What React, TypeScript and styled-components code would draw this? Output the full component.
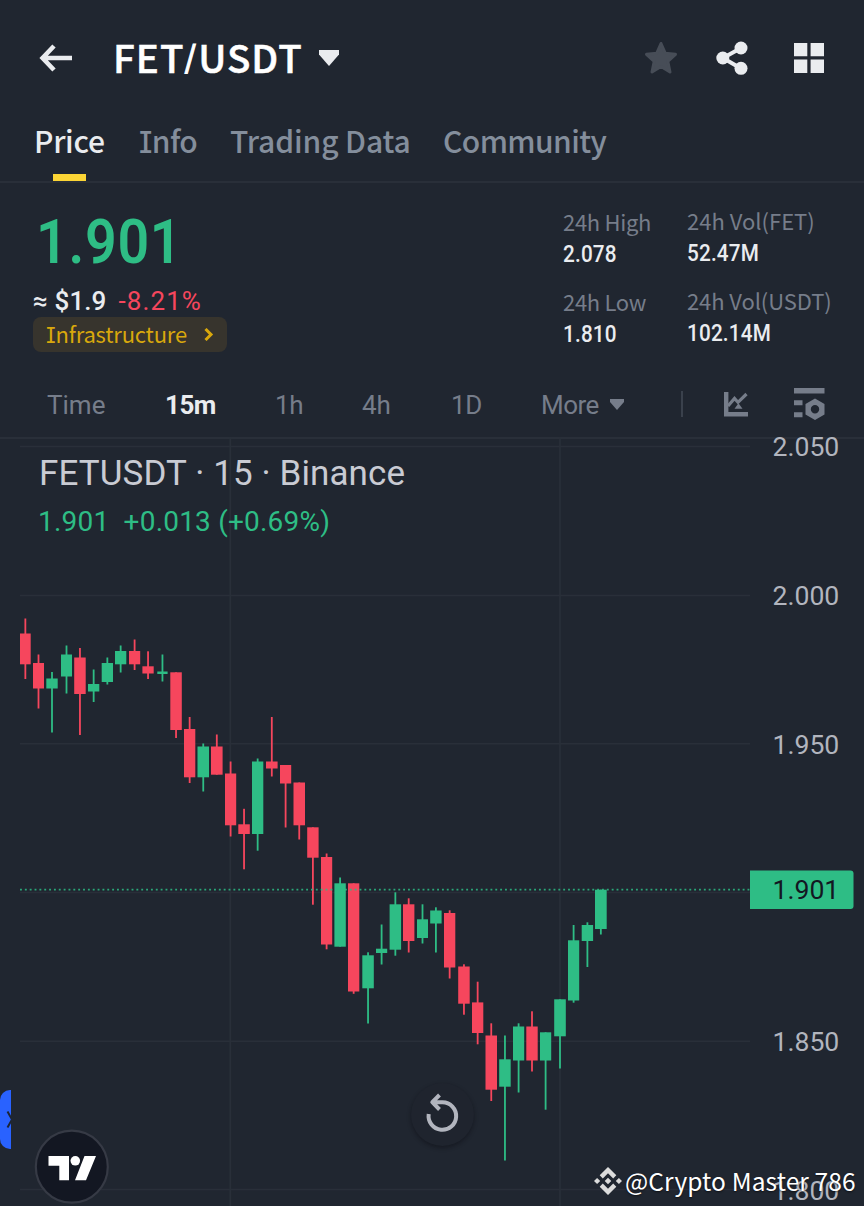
import React from "react";
import styled, { createGlobalStyle } from "styled-components";

const GREEN = "#2ebd85";
const RED = "#f6465d";
const BG = "#202630";
const GREY = "#848e9c";
const LINE = "#292f39";

const plex = '"Noto Sans CJK SC", "Noto Sans", sans-serif';
const din = 'Roboto, "Noto Sans", sans-serif';

const Global = createGlobalStyle`
  * { box-sizing: border-box; }
  html, body { margin: 0; background: ${BG}; }
  body { overflow: hidden; }
  svg { display: block; flex: none; }
`;

const Page = styled.main`
  width: 864px;
  height: 1206px;
  background: ${BG};
  display: flex;
  flex-direction: column;
  overflow: hidden;
`;

const TopBar = styled.header`
  height: 116px;
  display: flex;
  align-items: center;
  padding: 0 40px 0 39px;
`;

const Pair = styled.h1`
  margin: 0 0 0 40px;
  width: 206px;
  font: 500 38.5px/48px ${plex};
  letter-spacing: 1px;
  color: #fff;
  -webkit-text-stroke: 0.5px #fff;
  white-space: nowrap;
  padding-bottom: 4px;
`;

const Slash = styled.span`
  font-size: 30px;
  line-height: 0;
  vertical-align: 5px;
  letter-spacing: 2px;
  -webkit-text-stroke: 1px #fff;
`;

const Actions = styled.div`
  margin-left: auto;
  display: grid;
  grid-template-columns: 72px 78px 30px;
  align-items: center;
`;

const Tabs = styled.nav`
  height: 67px;
  display: grid;
  grid-template-columns: 105px 91px 213px 200px;
  padding-left: 34px;
  border-bottom: 2px solid ${LINE};
`;

const Tab = styled.div<{ $active?: boolean; $ls: number }>`
  display: flex;
  flex-direction: column;
  justify-content: space-between;
  font: 500 30px/36px ${plex};
  letter-spacing: ${(p) => p.$ls}px;
  color: ${(p) => (p.$active ? "#eaecef" : GREY)};
  white-space: nowrap;
  padding-top: 6px;
`;

const SlabI = styled.span<{ $size: number }>`
  font-family: Inter, sans-serif;
  font-size: ${(p) => p.$size}px;
  font-feature-settings: "cv08";
`;

const Underline = styled.i`
  width: 33px;
  height: 7px;
  margin-left: 19px;
  background: #fcd535;
`;

const Ticker = styled.section`
  height: 189px;
  display: flex;
  justify-content: space-between;
  padding-left: 33px;
`;

const PriceColumn = styled.div`
  display: flex;
  flex-direction: column;
  align-items: flex-start;
`;

const LastPrice = styled.div`
  font: 600 61px/64px ${din};
  letter-spacing: 0.8px;
  color: ${GREEN};
  margin: 27px 0 0 3px;
  transform: scaleX(0.91);
  transform-origin: left;
`;

const SubPrice = styled.div`
  display: flex;
  gap: 12px;
  margin-top: 12px;
  font: 500 26px/30px ${din};
  letter-spacing: 0.1px;
  color: #eaecef;
`;

const Change = styled.span`
  color: ${RED};
  font-weight: 400;
  letter-spacing: 1.1px;
`;

const Tag = styled.div`
  margin-top: 1px;
  width: 194px;
  height: 35px;
  border-radius: 8px;
  background: #37342d;
  color: #d9a80c;
  display: flex;
  align-items: center;
  justify-content: space-between;
  padding: 0 13px 0 13px;
  font: 400 22px/35px ${plex};
  letter-spacing: -0.2px;
`;

const Stats = styled.dl`
  margin: 0;
  padding-top: 22px;
  width: 301px;
  display: grid;
  grid-template-columns: 124px 177px;
  grid-auto-rows: 80px;
`;

const Stat = styled.div<{ $up?: boolean }>`
  margin-top: ${(p) => (p.$up ? -1 : 0)}px;
`;

const StatLabel = styled.dt<{ $ls: number }>`
  font: 400 22px/32px ${plex};
  letter-spacing: ${(p) => p.$ls}px;
  color: #767d8a;
`;

const StatValue = styled.dd`
  margin: 3px 0 0;
  font: 500 23px/30px ${din};
  letter-spacing: 0.2px;
  color: #eaecef;
  transform: scaleX(0.9);
  transform-origin: left;
`;

const Intervals = styled.nav`
  height: 67px;
  display: grid;
  grid-template-columns: 118px 110px 87px 89px 90px 69px 71px 43px 70px 40px;
  align-items: center;
  padding: 0 0 1px 47px;
  border-bottom: 2px solid ${LINE};
`;

const Interval = styled.span<{ $active?: boolean; $ls?: number }>`
  font: ${(p) => (p.$active ? 700 : 400)} 26px/32px ${din};
  letter-spacing: ${(p) => p.$ls ?? 0}px;
  color: ${(p) => (p.$active ? "#eaecef" : "#767d8a")};
  padding-top: 2px;
`;

const Divider = styled.i`
  width: 2px;
  height: 26px;
  background: #3a414c;
`;

const Chart = styled.section`
  position: relative;
  flex: 1;
  font-family: Roboto, sans-serif;
`;

const Plot = styled.svg`
  overflow: visible;
`;

const Legend = styled.div`
  position: absolute;
  left: 39px;
  top: 14px;
`;

const SymbolName = styled.div`
  font-size: 35px;
  line-height: 42px;
  color: #c9cbd3;
  letter-spacing: 0.1px;
  white-space: nowrap;
`;

const Quote = styled.div`
  margin: 11px 0 0 -1px;
  font-size: 28px;
  line-height: 32px;
  color: ${GREEN};
  letter-spacing: 0.2px;
  white-space: pre;
`;

const ResetButton = styled.div`
  position: absolute;
  left: 411px;
  top: 644px;
  width: 63px;
  height: 63px;
  border-radius: 50%;
  background: #1f242e;
  box-shadow: 0 2px 4px rgba(10, 12, 18, 0.45);
`;

const Handle = styled.div`
  position: absolute;
  left: 0;
  top: 651px;
  width: 11px;
  height: 59px;
  border-radius: 10px 0 0 10px;
  background: #2962ff;
`;

const Badge = styled.div`
  position: absolute;
  left: 34px;
  top: 690px;
`;

const Watermark = styled.div`
  position: absolute;
  left: 594px;
  top: 724px;
  display: flex;
  align-items: center;
  gap: 3px;
  font: 400 24.5px/36px "Noto Sans CJK SC", sans-serif;
  letter-spacing: 0.12px;
  color: #fff;
  white-space: nowrap;
  text-shadow: 0 1px 2px rgba(0, 0, 0, 0.6);
`;

// [left, width, body top, body bottom, wick top, wick bottom, rising]
type Candle = [number, number, number, number, number, number, 0 | 1];
const candles: Candle[] = [
  [20, 10.7, 633.5, 664.3, 618.5, 679, 0],
  [33, 11, 663, 688.5, 654.5, 708.5, 0],
  [46.3, 11.4, 678.5, 688.5, 672, 732.5, 1],
  [61, 11, 654.5, 676.5, 645.5, 693.5, 1],
  [74.2, 11.5, 657.5, 694, 648, 735, 0],
  [88, 11.3, 684, 691.5, 669.5, 702, 1],
  [101.7, 11.3, 663, 682, 657.5, 684.5, 1],
  [115, 11.3, 651, 664.3, 645.5, 672.5, 1],
  [129, 11.2, 651, 664.3, 639.5, 670, 0],
  [142.4, 11.3, 666.3, 673.5, 651.3, 679, 0],
  [157.3, 10.3, 671.5, 674, 654.5, 681.5, 1],
  [170.3, 11.5, 672.3, 730, 672.3, 738, 0],
  [184, 11.3, 729, 777.3, 717, 783, 0],
  [197.5, 11.5, 746.5, 777.3, 743.5, 791.5, 1],
  [211, 11.6, 746.5, 774.7, 734.5, 774.7, 0],
  [225, 11.2, 773.5, 825.3, 761.5, 836.5, 0],
  [238.3, 11.5, 824.3, 834, 808.8, 869.3, 0],
  [252, 11.3, 761.5, 834, 758.5, 850.7, 1],
  [266, 11.6, 761.5, 768.5, 717, 776.5, 0],
  [280, 11.2, 765, 783.5, 765, 827.5, 0],
  [293.5, 11.5, 782.5, 825.3, 782.5, 839.5, 0],
  [307.2, 11.4, 827.3, 857.7, 827.3, 904.7, 0],
  [321, 11.2, 857, 944.5, 853.5, 949.3, 0],
  [334.4, 11.4, 883.3, 946.7, 877.5, 946.7, 1],
  [348, 11.3, 883.3, 991.5, 883.3, 993.8, 0],
  [362.3, 11.5, 955.3, 988.3, 952.3, 1023.5, 1],
  [376, 11.2, 948.7, 953, 924.5, 964.5, 1],
  [389.6, 11.5, 904.3, 949.7, 892.3, 955.7, 1],
  [403, 11.4, 904.3, 941, 898.3, 952.5, 0],
  [417, 11, 919.3, 938, 904.3, 943.5, 1],
  [430.2, 11.4, 910.5, 923.5, 907.3, 952.5, 1],
  [444, 11.3, 913, 967.5, 910.3, 978.5, 0],
  [458.2, 11.5, 966.5, 1003.7, 964.3, 1014.7, 0],
  [472, 11.3, 1002.4, 1033, 981.7, 1044.3, 0],
  [485.5, 11.5, 1035.5, 1089.7, 1023.3, 1101, 0],
  [499.2, 11.5, 1059.3, 1086.7, 1035.5, 1160.5, 1],
  [513, 11.2, 1026.5, 1060.5, 1023.3, 1092.5, 1],
  [526.3, 11.4, 1026.5, 1060.5, 1011.3, 1071.5, 0],
  [540, 11.2, 1032.3, 1060.5, 1032.3, 1109.7, 1],
  [554.2, 11.6, 999.3, 1036.3, 999.3, 1068.5, 1],
  [568, 11.2, 940.3, 1000.5, 925, 1002.7, 1],
  [581.7, 11.4, 925, 941, 922.3, 967, 1],
  [595, 11.7, 889.7, 929, 889.7, 934.5, 1],
];

const gridRows = [446.5, 595.5, 743.7, 892.5, 1041.3, 1189.5];
const axis: [string, number][] = [
  ["2.050", 456],
  ["2.000", 605],
  ["1.950", 753.5],
  ["1.850", 1051],
  ["1.800", 1199.5],
];

const PriceChart = () => (
  <Plot width="864" height="767" viewBox="0 439 864 767">
    {gridRows.map((y) => (
      <path key={y} d={`M20 ${y}H750`} stroke={LINE} strokeWidth="1.5" />
    ))}
    <path d="M230.3 437V1206M560 437V1206" stroke={LINE} strokeWidth="1.7" />
    {candles.map(([x, w, top, bottom, high, low, rising]) => (
      <g key={x} fill={rising ? GREEN : RED}>
        <rect x={x + w / 2 - 0.9} y={high} width="1.8" height={low - high} />
        <rect x={x} y={top} width={w} height={bottom - top} />
      </g>
    ))}
    <path d="M20 889.6H750" stroke={GREEN} strokeWidth="1.8" strokeDasharray="1.9 2.95" opacity=".85" />
    <path d="M750 870.5H850.5a3 3 0 0 1 3 3V906a3 3 0 0 1-3 3H750Z" fill={GREEN} />
    <g fontSize="26.6" fill="#b2b5be">
      {axis.map(([label, y]) => (
        <text key={label} x="772.5" y={y}>{label}</text>
      ))}
      <text x="772.5" y="899" fill="#131722">1.901</text>
    </g>
  </Plot>
);

const BackIcon = () => (
  <svg width="34" height="28" viewBox="0 0 34 28" fill="none" stroke="#eaecef" strokeWidth="4.6">
    <path d="M15 2 3.6 14 15 26M4 14H33" />
  </svg>
);

const Caret = ({ w, h, color }: { w: number; h: number; color: string }) => (
  <svg width={w} height={h} viewBox="0 0 20 16" preserveAspectRatio="none">
    <path d="M0 0H20V4.5L10 16 0 4.5Z" fill={color} />
  </svg>
);

const StarIcon = () => (
  <svg width="34" height="34" viewBox="0 0 34 34">
    <path
      d="M17 2.5 21.2 12.2 31.5 13.3 23.8 20.4 26 31 17 25.5 8 31 10.2 20.4 2.5 13.3 12.8 12.2Z"
      fill="#474d57" stroke="#474d57" strokeWidth="3" strokeLinejoin="round"
    />
  </svg>
);

const ShareIcon = () => (
  <svg width="32" height="34" viewBox="0 0 32 34" fill="#eaecef">
    <path d="M7 17 25 7M7 17 25 27.5" stroke="#eaecef" strokeWidth="4" />
    <circle cx="6.8" cy="17" r="6.5" />
    <circle cx="25" cy="7" r="6.5" />
    <circle cx="25" cy="27.3" r="6.5" />
  </svg>
);

const GridIcon = () => (
  <svg width="30" height="30" viewBox="0 0 30 30" fill="#eaecef">
    <path d="M0 0H13.3V13.3H0ZM16.6 0H30V13.3H16.6ZM0 16.6H13.3V30H0ZM16.6 16.6H30V30H16.6Z" />
  </svg>
);

const ChevronIcon = () => (
  <svg width="10" height="13" viewBox="0 0 10 13" fill="none" stroke="#d9a80c" strokeWidth="3">
    <path d="M1.5 1 7 6.5 1.5 12" />
  </svg>
);

const LineChartIcon = () => (
  <svg width="25" height="25" viewBox="0 0 25 25" fill="none" stroke="#767d8a">
    <path d="M2.2 0V22.3H24" strokeWidth="4.4" />
    <path d="M4 14 10.5 6.5 14 10.3 22.5 2" strokeWidth="3.2" />
    <path d="M14.5 11.2 18.5 16.8H10.5Z" fill="#767d8a" stroke="none" />
  </svg>
);

const SettingsIcon = () => (
  <svg width="31" height="33" viewBox="0 0 31 33" fill="#767d8a">
    <path d="M0 0H30.5V5.5H0ZM0 12.3H8.5V17.3H0ZM0 24.2H8.5V29.2H0Z" />
    <path fillRule="evenodd" d="M21 10.5 30.5 16V26.5L21 32 11.5 26.5V16ZM21 17a4.2 4.2 0 1 0 0 8.4 4.2 4.2 0 1 0 0-8.4Z" />
  </svg>
);

const ResetIcon = () => (
  <svg width="63" height="63" viewBox="411 1083 63 63" fill="none" stroke="#b2b5be" strokeWidth="4" strokeLinejoin="round">
    <path d="M428.7 1114A13.8 13.8 0 1 0 442.5 1102.2H432.5M439.5 1095 432.3 1102.2 439.5 1109.5" />
  </svg>
);

const TradingViewBadge = () => (
  <svg width="76" height="76" viewBox="34 1129 76 76">
    <circle cx="71.8" cy="1166.7" r="36" fill="#131722" stroke="#363a45" strokeWidth="2.2" />
    <path d="M48.5 1156H69V1180.3H59.3V1165.7H48.5ZM84.5 1156H96L86 1180.3H75Z" fill="#fff" />
    <circle cx="75.3" cy="1160.8" r="4.8" fill="#fff" />
  </svg>
);

const BinanceMark = () => (
  <svg width="28" height="28" viewBox="0 0 28 28" fill="#dcdcdc">
    <path d="M14 0 22.3 8.3 19.2 11.4 14 6.2 8.8 11.4 5.7 8.3ZM14 28 5.7 19.7 8.8 16.6 14 21.8 19.2 16.6 22.3 19.7ZM3.1 10.9 6.2 14 3.1 17.1 0 14ZM24.9 10.9 28 14 24.9 17.1 21.8 14ZM14 10.7 17.3 14 14 17.3 10.7 14Z" />
  </svg>
);

export default function App() {
  return (
    <Page>
      <Global />
      <TopBar>
        <BackIcon />
        <Pair>FET<Slash>/</Slash>USDT</Pair>
        <Caret w={20} h={16} color="#eaecef" />
        <Actions>
          <StarIcon />
          <ShareIcon />
          <GridIcon />
        </Actions>
      </TopBar>
      <Tabs>
        <Tab $active $ls={-0.3}>Price<Underline /></Tab>
        <Tab $ls={-0.6}><span><SlabI $size={29.5}>I</SlabI>nfo</span></Tab>
        <Tab $ls={-0.1}>Trading Data</Tab>
        <Tab $ls={-0.6}>Community</Tab>
      </Tabs>
      <Ticker>
        <PriceColumn>
          <LastPrice>1.901</LastPrice>
          <SubPrice>
            <span>≈ $1.9</span>
            <Change>-8.21%</Change>
          </SubPrice>
          <Tag><span><SlabI $size={22}>I</SlabI>nfrastructure</span><ChevronIcon /></Tag>
        </PriceColumn>
        <Stats>
          <Stat><StatLabel $ls={-0.3}>24h High</StatLabel><StatValue>2.078</StatValue></Stat>
          <Stat $up><StatLabel $ls={0}>24h Vol(FET)</StatLabel><StatValue>52.47M</StatValue></Stat>
          <Stat><StatLabel $ls={-0.3}>24h Low</StatLabel><StatValue>1.810</StatValue></Stat>
          <Stat $up><StatLabel $ls={-0.1}>24h Vol(USDT)</StatLabel><StatValue>102.14M</StatValue></Stat>
        </Stats>
      </Ticker>
      <Intervals>
        <Interval>Time</Interval>
        <Interval $active $ls={-0.5}>15m</Interval>
        <Interval $ls={-0.3}>1h</Interval>
        <Interval>4h</Interval>
        <Interval $ls={-0.3}>1D</Interval>
        <Interval $ls={-0.5}>More</Interval>
        <Caret w={14} h={11} color="#767d8a" />
        <Divider />
        <LineChartIcon />
        <SettingsIcon />
      </Intervals>
      <Chart>
        <PriceChart />
        <Legend>
          <SymbolName>FETUSDT · 15 · Binance</SymbolName>
          <Quote>{"1.901  +0.013 (+0.69%)"}</Quote>
        </Legend>
        <ResetButton><ResetIcon /></ResetButton>
        <Handle>
          <svg width="11" height="59" viewBox="0 0 11 59" fill="none" stroke="#1c2433" strokeWidth="2">
            <path d="M7.5 21.5 12 29.5 7.5 37.5" />
          </svg>
        </Handle>
        <Badge><TradingViewBadge /></Badge>
        <Watermark><BinanceMark />@Crypto Master 786</Watermark>
      </Chart>
    </Page>
  );
}
